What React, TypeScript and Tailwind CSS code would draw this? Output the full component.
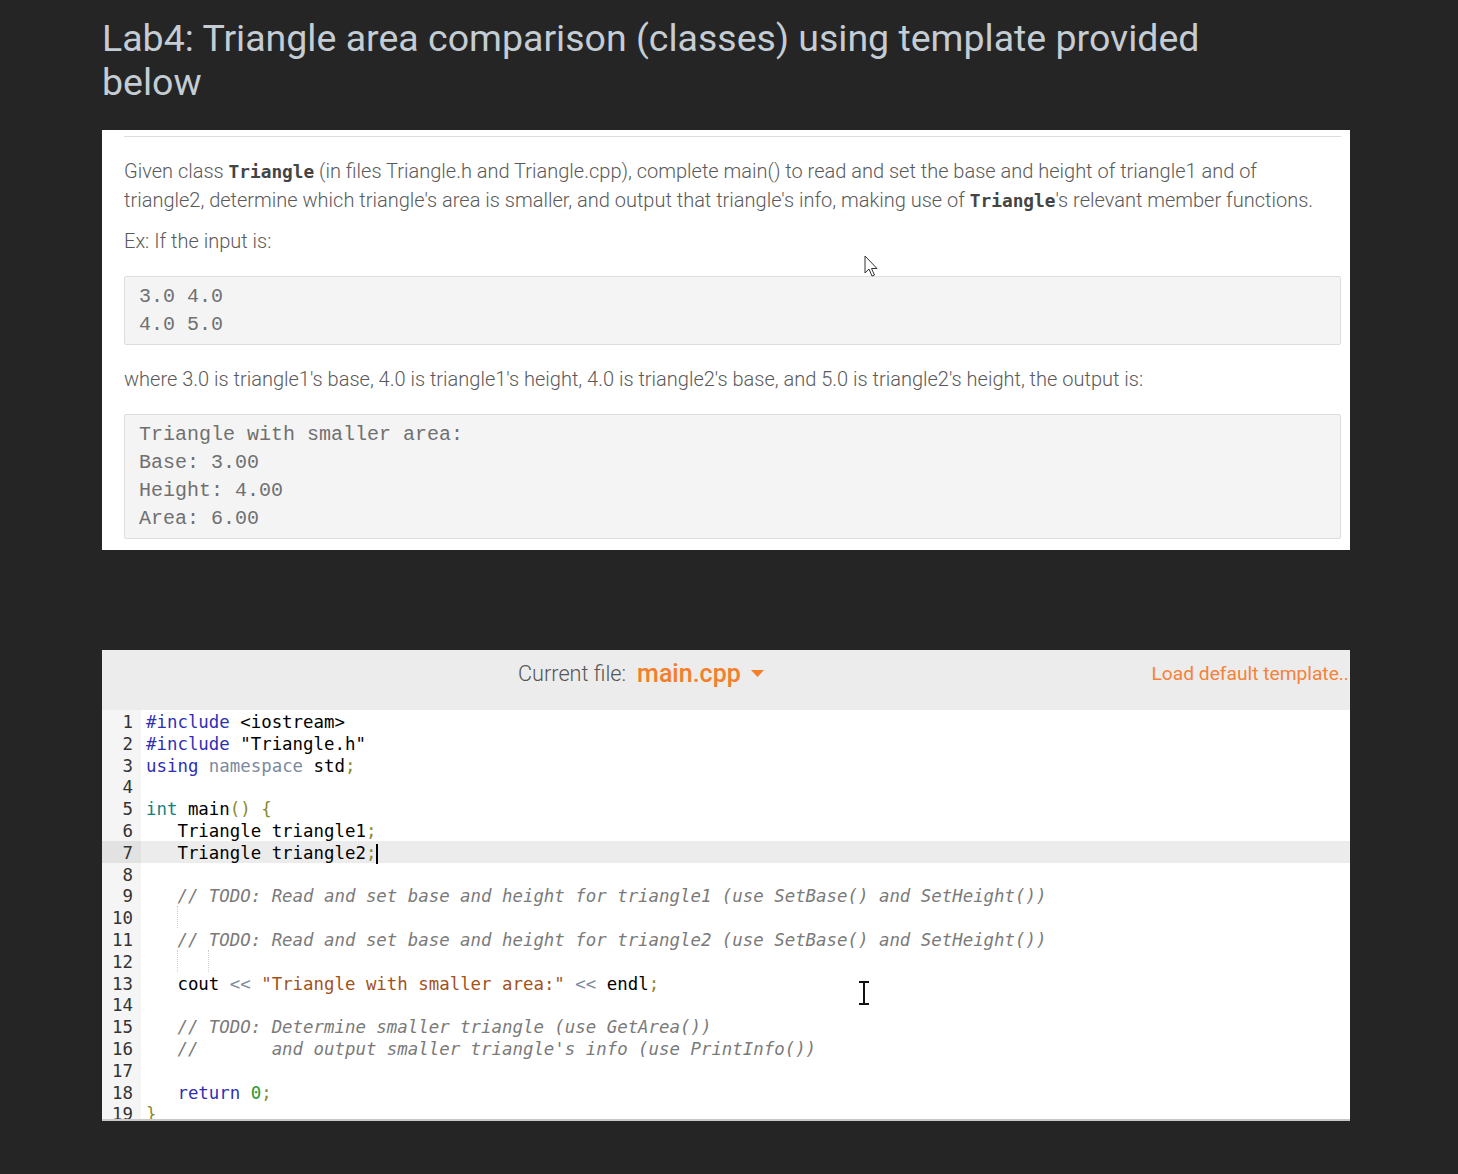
import React from 'react';

type Tok = [string, string?];

const K = 'text-[#2f2fb3]';
const N = 'text-[#7b8aa0]';
const P = 'text-[#8a8a2e]';
const T = 'text-[#11807f]';
const C = 'italic text-[#7a7a7a]';
const S = 'text-[#a1521c]';
const O = 'text-[#7b8aa0]';
const G = 'text-[#1f9a2a]';

const lines: Tok[][] = [
  [['#include', K], [' <iostream>']],
  [['#include', K], [' "Triangle.h"']],
  [['using', K], [' '], ['namespace', N], [' std'], [';', P]],
  [],
  [['int', T], [' main'], ['() {', P]],
  [['   Triangle triangle1'], [';', P]],
  [['   Triangle triangle2'], [';', P]],
  [],
  [['   '], ['// TODO: Read and set base and height for triangle1 (use SetBase() and SetHeight())', C]],
  [],
  [['   '], ['// TODO: Read and set base and height for triangle2 (use SetBase() and SetHeight())', C]],
  [],
  [['   cout '], ['<<', O], [' '], ['"Triangle with smaller area:"', S], [' '], ['<<', O], [' endl'], [';', P]],
  [],
  [['   '], ['// TODO: Determine smaller triangle (use GetArea())', C]],
  [['   '], ["//       and output smaller triangle's info (use PrintInfo())", C]],
  [],
  [['   '], ['return', K], [' '], ['0', G], [';', P]],
  [['}', P]],
];

const roboto = { fontFamily: 'Roboto, "Liberation Sans", sans-serif' };
const mono = { fontFamily: '"DejaVu Sans Mono", "Liberation Mono", monospace' };
const courier = { fontFamily: '"Liberation Mono", monospace' };

function InlineCode({ children }: { children: React.ReactNode }) {
  return (
    <code className="text-[17.8px] font-bold leading-none text-[#444]" style={mono}>
      {children}
    </code>
  );
}

function CodeLine({ n, toks }: { n: number; toks: Tok[] }) {
  const active = n === 7;
  return (
    <div className={`flex h-[21.8px] leading-[21.8px] ${active ? 'bg-[#ececec]' : ''}`}>
      <div className={`w-[39px] shrink-0 pr-[8px] pt-[2px] text-right text-[#333] ${active ? 'bg-[#e2e2e2]' : 'bg-[#f5f5f5]'}`}>
        {n}
      </div>
      <div className="relative flex-1 whitespace-pre pl-[5px] pt-[2px] text-black">
        {toks.map(([t, c], i) => (
          <span key={i} className={c ?? ''}>
            {t}
          </span>
        ))}
        {active && <span className="inline-block h-[20px] w-[2px] bg-black align-middle" />}
        {(n === 10 || n === 12) && (
          <span className="absolute left-[36px] top-0 h-full border-l border-dotted border-[#cfcfcf]" />
        )}
        {n === 12 && <span className="absolute left-[67px] top-0 h-full border-l border-dotted border-[#cfcfcf]" />}
      </div>
    </div>
  );
}

export default function App() {
  return (
    <div className="min-h-screen bg-[#252525] pl-[102px] pt-[16px]" style={roboto}>
      <h1 className="w-[1150px] text-[37.5px] leading-[44px] text-[#c4ccd4]">
        Lab4: Triangle area comparison (classes) using template provided below
      </h1>

      <div className="relative mt-[26px] w-[1248px] bg-white pb-[11px] pl-[22px] pr-[9px] pt-[6px]">
        <div className="h-px bg-[#dddddd]" />
        <p className="mt-[20px] pr-[18px] text-[20px] font-light leading-[29px] text-[#5a5a5a]">
          Given class <InlineCode>Triangle</InlineCode> (in files Triangle.h and Triangle.cpp), complete main() to read
          and set the base and height of triangle1 and of triangle2, determine which triangle's area is smaller, and
          output that triangle's info, making use of <InlineCode>Triangle</InlineCode>'s relevant member functions.
        </p>
        <p className="mt-[12px] text-[20px] font-light leading-[29px] text-[#5a5a5a]">Ex: If the input is:</p>
        <pre
          className="mt-[20px] rounded-[2px] border border-[#dddddd] bg-[#f4f4f4] pb-[5px] pl-[14px] pt-[6px] text-[20px] leading-[28px] text-[#707070]"
          style={courier}
        >
          {'3.0 4.0\n4.0 5.0'}
        </pre>
        <p className="mt-[20px] text-[20px] font-light leading-[29px] text-[#5a5a5a]">
          where 3.0 is triangle1's base, 4.0 is triangle1's height, 4.0 is triangle2's base, and 5.0 is triangle2's
          height, the output is:
        </p>
        <pre
          className="mt-[20px] rounded-[2px] border border-[#dddddd] bg-[#f4f4f4] pb-[5px] pl-[14px] pt-[6px] text-[20px] leading-[28px] text-[#707070]"
          style={courier}
        >
          {'Triangle with smaller area:\nBase: 3.00\nHeight: 4.00\nArea: 6.00'}
        </pre>
        <svg className="absolute left-[762px] top-[125px]" width="16" height="24" viewBox="0 0 16 24">
          <path d="M1 1 L1 18 L5 14 L8 21 L10.5 20 L7.5 13.5 L13 13.5 Z" fill="white" stroke="#333" strokeWidth="1" />
        </svg>
      </div>

      <div className="relative mt-[100px] w-[1248px] bg-white">
        <div className="flex h-[60px] items-center overflow-hidden bg-[#ececec] pb-[12px] pl-[416px]">
          <span className="text-[21.7px] font-light text-[#555]">Current file:</span>
          <span className="ml-[11px] text-[25px] font-medium text-[#f47f2a]">main.cpp</span>
          <svg className="ml-[10px]" width="13" height="8" viewBox="0 0 13 8">
            <path d="M0 0 H13 L6.5 7 Z" fill="#f47f2a" />
          </svg>
          <span className="-mr-[4px] ml-auto whitespace-nowrap text-[19.2px] text-[#f5823a]">Load default template...</span>
        </div>
        <div className="h-[409px] overflow-hidden text-[17.4px]" style={mono}>
          {lines.map((toks, i) => (
            <CodeLine key={i} n={i + 1} toks={toks} />
          ))}
        </div>
        <div className="h-[2px] bg-[#c8c8c8]" />
        <svg className="absolute left-[755px] top-[331px]" width="14" height="24" viewBox="0 0 14 24">
          <path d="M2 1 H12 M7 1 V23 M2 23 H12" stroke="#111" strokeWidth="2" fill="none" />
        </svg>
      </div>
    </div>
  );
}
